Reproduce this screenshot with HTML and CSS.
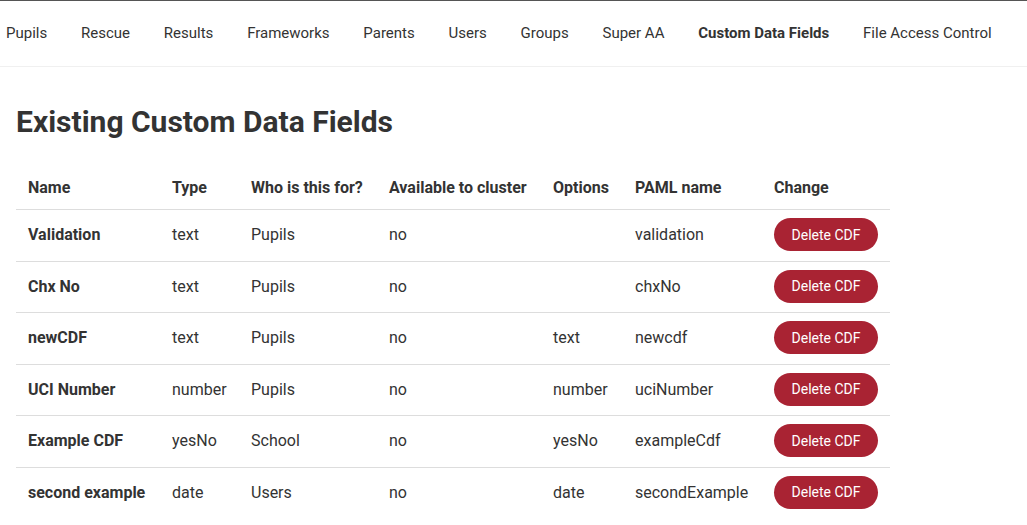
FILE: index.html
```html
<!DOCTYPE html>
<html lang="en">
<head>
<meta charset="utf-8">
<title>Custom Data Fields</title>
<link rel="stylesheet" href="styles.css">
</head>
<body>
<nav class="topnav">
  <a class="nav-item">Pupils</a>
  <a class="nav-item">Rescue</a>
  <a class="nav-item">Results</a>
  <a class="nav-item">Frameworks</a>
  <a class="nav-item">Parents</a>
  <a class="nav-item">Users</a>
  <a class="nav-item">Groups</a>
  <a class="nav-item">Super AA</a>
  <a class="nav-item active">Custom Data Fields</a>
  <a class="nav-item">File Access Control</a>
</nav>
<main class="content">
  <h1 class="title">Existing Custom Data Fields</h1>
  <table class="cdf-table">
    <thead>
      <tr>
        <th class="c-name">Name</th><th class="c-type">Type</th><th class="c-who">Who is this for?</th><th class="c-avail">Available to cluster</th><th class="c-opt">Options</th><th class="c-paml">PAML name</th><th class="c-change">Change</th>
      </tr>
    </thead>
    <tbody>
      <tr><td class="name">Validation</td><td>text</td><td>Pupils</td><td>no</td><td></td><td>validation</td><td><button class="btn-delete">Delete CDF</button></td></tr>
      <tr><td class="name">Chx No</td><td>text</td><td>Pupils</td><td>no</td><td></td><td>chxNo</td><td><button class="btn-delete">Delete CDF</button></td></tr>
      <tr><td class="name">newCDF</td><td>text</td><td>Pupils</td><td>no</td><td>text</td><td>newcdf</td><td><button class="btn-delete">Delete CDF</button></td></tr>
      <tr><td class="name">UCI Number</td><td>number</td><td>Pupils</td><td>no</td><td>number</td><td>uciNumber</td><td><button class="btn-delete">Delete CDF</button></td></tr>
      <tr><td class="name">Example CDF</td><td>yesNo</td><td>School</td><td>no</td><td>yesNo</td><td>exampleCdf</td><td><button class="btn-delete">Delete CDF</button></td></tr>
      <tr><td class="name">second example</td><td>date</td><td>Users</td><td>no</td><td>date</td><td>secondExample</td><td><button class="btn-delete">Delete CDF</button></td></tr>
    </tbody>
  </table>
</main>
</body>
</html>
```
FILE: styles.css
```css
html, body {
  margin: 0;
  padding: 0;
  background: #fff;
  font-family: Roboto, "Liberation Sans", Arial, sans-serif;
  color: #333;
}
body {
  border-top: 1px solid #555;
}
.topnav {
  display: flex;
  align-items: center;
  box-sizing: border-box;
  height: 66px;
  padding: 0 0 2px 6px;
  border-bottom: 1px solid #f0f0f0;
  gap: 33.8px;
}
.nav-item {
  font-size: 15px;
  color: #333;
  text-decoration: none;
}
.nav-item.active {
  font-weight: 700;
}
.content {
  padding: 0 16px;
}
.title {
  margin: 35px 0 23px;
  font-size: 30px;
  font-weight: 700;
  line-height: 40px;
  color: #333;
}
.cdf-table {
  border-collapse: collapse;
  table-layout: fixed;
  width: 874px;
  font-size: 16px;
}
.c-name { width: 144px; }
.c-type { width: 79px; }
.c-who { width: 138px; }
.c-avail { width: 164px; }
.c-opt { width: 82px; }
.c-paml { width: 139px; }
.c-change { width: 128px; }
.cdf-table th {
  box-sizing: border-box;
  text-align: left;
  font-weight: 700;
  padding: 12px 12px 11px;
  line-height: 21px;
  border-bottom: 1px solid #ddd;
}
.cdf-table td {
  padding: 8px 12px 9.6px;
  line-height: 21px;
  height: 33px;
  border-bottom: 1px solid #ddd;
  vertical-align: middle;
}
.cdf-table tbody tr:last-child td {
  border-bottom: none;
}
.cdf-table td.name {
  font-weight: 700;
}
.btn-delete {
  display: block;
  width: 104px;
  height: 33px;
  border: none;
  border-radius: 17px;
  background: #a92333;
  color: #fff;
  font-family: Roboto, "Liberation Sans", Arial, sans-serif;
  font-size: 14px;
  padding: 0;
}
```
